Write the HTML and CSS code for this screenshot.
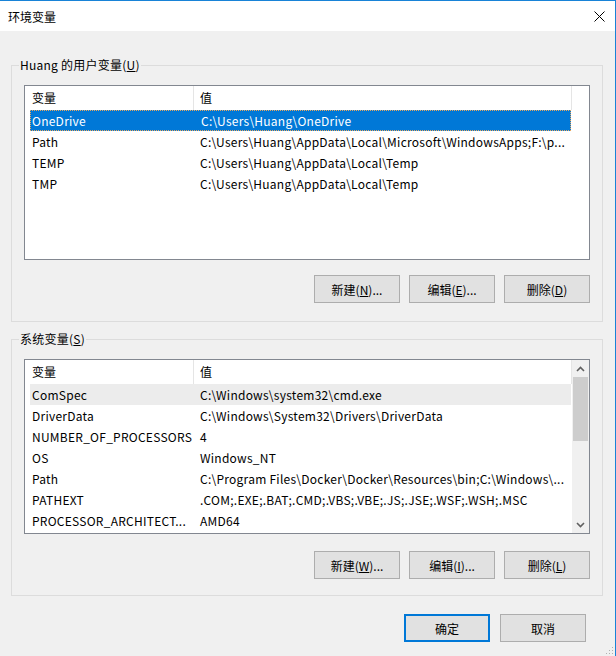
FILE: index.html
```html
<!DOCTYPE html>
<html lang="zh-CN">
<head>
    <meta charset="UTF-8">
    <title>环境变量</title>
    <link rel="stylesheet" href="styles.css">
</head>
<body>

    <div class="window">
        <div class="titlebar">
            <span class="title">环境变量</span>
            <svg class="close" width="11" height="11" viewBox="0 0 11 11">
                <path d="M0.5 0.5L10.5 10.5M10.5 0.5L0.5 10.5" stroke="#000" stroke-width="1"/>
            </svg>
        </div>

        <div class="content">
            <fieldset class="group group-user">
                <legend>Huang 的用户变量(<u>U</u>)</legend>
                <div class="list">
                    <div class="list-head">
                        <div class="head-name">变量</div>
                        <div class="head-value">值</div>
                    </div>
                    <div class="row selected"><span class="cell-name">OneDrive</span><span class="cell-value">C:\Users\Huang\OneDrive</span></div>
                    <div class="row"><span class="cell-name">Path</span><span class="cell-value">C:\Users\Huang\AppData\Local\Microsoft\WindowsApps;F:\p...</span></div>
                    <div class="row"><span class="cell-name">TEMP</span><span class="cell-value">C:\Users\Huang\AppData\Local\Temp</span></div>
                    <div class="row"><span class="cell-name">TMP</span><span class="cell-value">C:\Users\Huang\AppData\Local\Temp</span></div>
                </div>
                <div class="buttons">
                    <button class="btn">新建(<u>N</u>)...</button>
                    <button class="btn">编辑(<u>E</u>)...</button>
                    <button class="btn">删除(<u>D</u>)</button>
                </div>
            </fieldset>

            <fieldset class="group group-system">
                <legend>系统变量(<u>S</u>)</legend>
                <div class="list list-scroll">
                    <div class="list-main">
                        <div class="list-head">
                            <div class="head-name">变量</div>
                            <div class="head-value">值</div>
                        </div>
                        <div class="row hover"><span class="cell-name">ComSpec</span><span class="cell-value">C:\Windows\system32\cmd.exe</span></div>
                        <div class="row"><span class="cell-name">DriverData</span><span class="cell-value">C:\Windows\System32\Drivers\DriverData</span></div>
                        <div class="row"><span class="cell-name">NUMBER_OF_PROCESSORS</span><span class="cell-value">4</span></div>
                        <div class="row"><span class="cell-name">OS</span><span class="cell-value">Windows_NT</span></div>
                        <div class="row"><span class="cell-name">Path</span><span class="cell-value">C:\Program Files\Docker\Docker\Resources\bin;C:\Windows\...</span></div>
                        <div class="row"><span class="cell-name">PATHEXT</span><span class="cell-value">.COM;.EXE;.BAT;.CMD;.VBS;.VBE;.JS;.JSE;.WSF;.WSH;.MSC</span></div>
                        <div class="row"><span class="cell-name">PROCESSOR_ARCHITECT...</span><span class="cell-value">AMD64</span></div>
                    </div>
                    <div class="scrollbar">
                        <div class="arrow">
                            <svg width="9" height="6" viewBox="0 0 9 6"><path d="M1 5L4.5 1.5L8 5" fill="none" stroke="#606060" stroke-width="1.6"/></svg>
                        </div>
                        <div class="track"><div class="thumb"></div></div>
                        <div class="arrow">
                            <svg width="9" height="6" viewBox="0 0 9 6"><path d="M1 1L4.5 4.5L8 1" fill="none" stroke="#606060" stroke-width="1.6"/></svg>
                        </div>
                    </div>
                </div>
                <div class="buttons">
                    <button class="btn">新建(<u>W</u>)...</button>
                    <button class="btn">编辑(<u>I</u>)...</button>
                    <button class="btn">删除(<u>L</u>)</button>
                </div>
            </fieldset>

            <div class="footer">
                <button class="btn btn-default">确定</button>
                <button class="btn">取消</button>
            </div>
        </div>

        <svg class="grip" width="8" height="8" viewBox="0 0 8 8">
            <rect x="6" y="0" width="1" height="1" fill="#b0b0b0"/>
            <rect x="3" y="3" width="1" height="1" fill="#b0b0b0"/>
            <rect x="6" y="3" width="1" height="1" fill="#b0b0b0"/>
            <rect x="0" y="6" width="1" height="1" fill="#b0b0b0"/>
            <rect x="3" y="6" width="1" height="1" fill="#b0b0b0"/>
            <rect x="6" y="6" width="1" height="1" fill="#b0b0b0"/>
        </svg>
    </div>

</body>
</html>
```

FILE: styles.css
```css
body {
    margin: 0;
    background: #f0f0f0;
    font-family: "Noto Sans CJK SC", "Noto Sans", sans-serif;
    font-size: 12px;
    color: #000;
}

.window {
    position: relative;
    width: 615px;
    height: 655px;
    background: #f0f0f0;
    border-top: 1px solid #1883d7;
    border-right: 1px solid #1883d7;
}

.titlebar {
    height: 30px;
    background: #fff;
    display: flex;
    align-items: center;
    justify-content: space-between;
    padding: 0 10px 0 8px;
}

.content {
    padding: 26px 12px 0 11px;
}

.group {
    margin: 0;
    min-width: 0;
    border: 1px solid #dcdcdc;
    padding: 12px 12px 17px 12px;
}

.group legend {
    margin-left: -5px;
    padding: 0 1px;
    line-height: 16px;
    letter-spacing: 0.25px;
}

.group-user {
    padding-bottom: 18px;
}

.group-user .buttons {
    margin-top: 15px;
}

.group-system {
    margin-top: 9px;
    padding-bottom: 16px;
}

.group-system .buttons {
    margin-top: 17px;
}

.list {
    box-sizing: border-box;
    height: 175px;
    border: 1px solid #828790;
    background: #fff;
    overflow: hidden;
}

.list-scroll {
    display: flex;
}

.list-main {
    flex: 1;
    overflow: hidden;
}

.list-head {
    display: flex;
    height: 24px;
    line-height: 24px;
}

.head-name {
    box-sizing: border-box;
    width: 169px;
    padding-left: 7px;
    border-right: 1px solid #e5e5e5;
}

.head-value {
    box-sizing: border-box;
    width: 378px;
    padding-left: 6px;
    border-right: 1px solid #e5e5e5;
}

.row {
    box-sizing: border-box;
    display: flex;
    align-items: center;
    width: 541px;
    height: 21px;
    margin-left: 5px;
    padding-bottom: 1px;
    white-space: nowrap;
    overflow: hidden;
    letter-spacing: 0.25px;
}

.row.selected {
    background: #0078d7;
    color: #fff;
    border: 1px dotted #e8a860;
}

.row.selected .cell-name {
    padding-left: 1px;
}

.row.hover {
    background: #ececec;
}

.cell-name {
    box-sizing: border-box;
    flex: none;
    width: 170px;
    padding-left: 2px;
}

.scrollbar {
    width: 17px;
    background: #f0f0f0;
    display: flex;
    flex-direction: column;
}

.arrow {
    height: 17px;
    display: flex;
    align-items: center;
    justify-content: center;
}

.track {
    flex: 1;
}

.thumb {
    height: 64px;
    margin: 0 1px;
    background: #cdcdcd;
}

.buttons {
    display: flex;
    justify-content: flex-end;
    gap: 9px;
}

.btn {
    box-sizing: border-box;
    width: 86px;
    height: 28px;
    padding: 0;
    background: #e1e1e1;
    border: 1px solid #adadad;
    font: inherit;
    color: #000;
}

.btn-default {
    border: 2px solid #0078d7;
}

.footer {
    display: flex;
    justify-content: flex-end;
    gap: 10px;
    margin-top: 18px;
    padding-right: 17px;
}

.grip {
    position: absolute;
    right: 1px;
    bottom: 1px;
}
```
